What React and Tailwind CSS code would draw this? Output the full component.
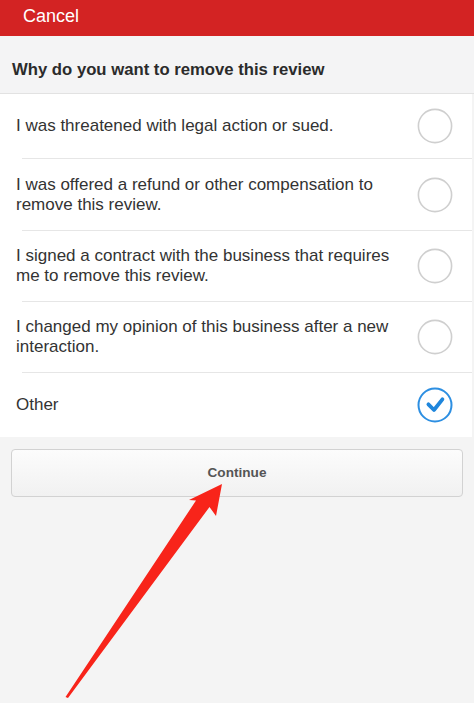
import React from "react";

const rows = [
  { lines: ["I was threatened with legal action or sued."], h: "h-[64px]" },
  { lines: ["I was offered a refund or other compensation to", "remove this review."], h: "h-[71px]" },
  { lines: ["I signed a contract with the business that requires", "me to remove this review."], h: "h-[70px]" },
  { lines: ["I changed my opinion of this business after a new", "interaction."], h: "h-[70px]" },
  { lines: ["Other"], h: "h-[64px]", checked: true },
];

function Radio({ checked }) {
  if (checked) {
    return (
      <svg width="36" height="36" viewBox="0 0 36 36" className="shrink-0">
        <circle cx="18" cy="18" r="16.5" fill="white" stroke="#2d8fe2" strokeWidth="2" />
        <path d="M11.4 17.3 L17 23 L25.4 12.3" fill="none" stroke="#1f86dc" strokeWidth="3.8" strokeLinecap="round" strokeLinejoin="round" />
      </svg>
    );
  }
  return (
    <svg width="36" height="36" viewBox="0 0 36 36" className="shrink-0">
      <circle cx="18" cy="18" r="16.6" fill="white" stroke="#cfcfcf" strokeWidth="1.6" />
    </svg>
  );
}

export default function App() {
  return (
    <div
      className="relative w-[474px] h-[703px] overflow-hidden bg-[#f4f4f4] text-[#333]"
      style={{ fontFamily: '"Liberation Sans", Arial, sans-serif' }}
    >
      <div className="h-[36px] bg-[#d32323] pl-[23px] pt-[5px]">
        <span className="text-[18px] leading-[18px] text-white">Cancel</span>
      </div>
      <div className="h-[58px] bg-[#f4f4f5] pl-[12px] pt-[24px] border-b border-[#e2e2e2]">
        <div className="text-[16.7px] leading-[20px] font-bold text-[#2b2b2b]">
          Why do you want to remove this review
        </div>
      </div>
      <div className="bg-white mr-[2px]">
        {rows.map((r, i) => (
          <div key={i}>
            <div className={`flex items-center justify-between pl-[16px] pr-[19px] ${r.h}`}>
              <div className="text-[17px] leading-[20px] text-[#333]">
                {r.lines.map((l, j) => (
                  <div key={j}>{l}</div>
                ))}
              </div>
              <Radio checked={r.checked} />
            </div>
            {i < rows.length - 1 && <div className="ml-[22px] h-px bg-[#e6e6e6]" />}
          </div>
        ))}
      </div>
      <div className="pt-[12px] pl-[11px]">
        <div className="w-[452px] h-[48px] rounded-[4px] border border-[#d2d2d2] bg-gradient-to-b from-[#fcfcfc] to-[#f1f1f1] flex items-center justify-center">
          <span className="text-[13.6px] font-bold text-[#555]">Continue</span>
        </div>
      </div>
      <svg className="absolute inset-0 pointer-events-none" width="474" height="703" viewBox="0 0 474 703">
        <polygon
          points="222,484 216,516 209.5,507 68,698 65.5,697 196,500.5 189,500"
          fill="#f8241a"
        />
      </svg>
    </div>
  );
}
